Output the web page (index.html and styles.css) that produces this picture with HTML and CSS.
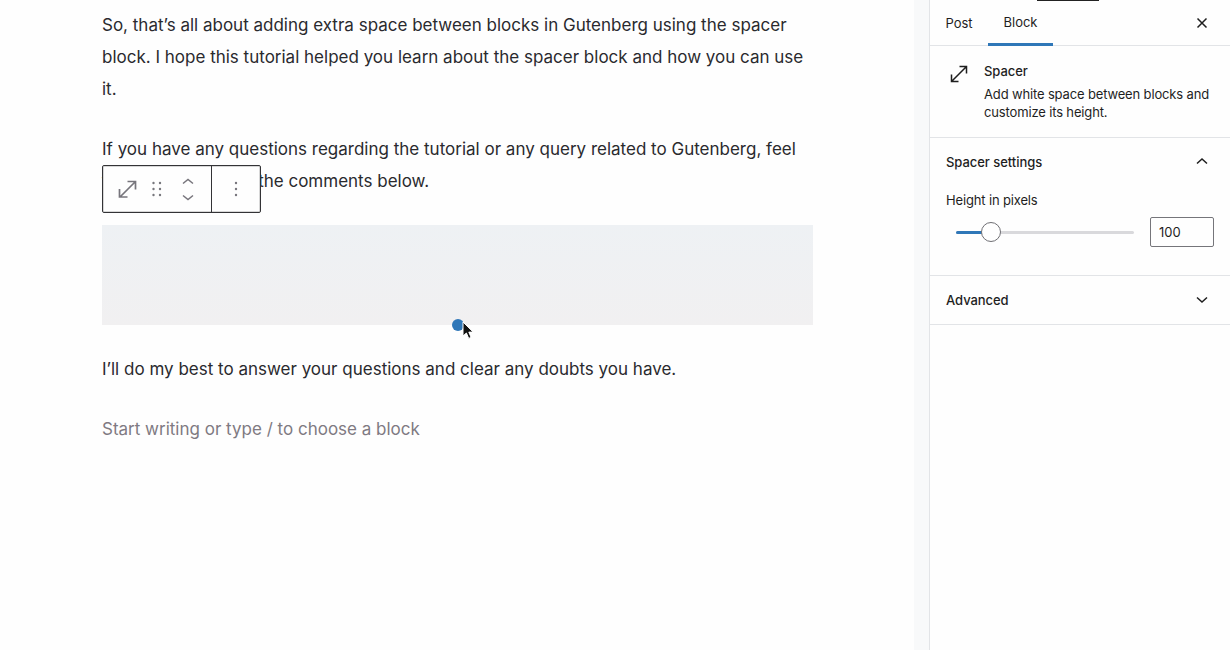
FILE: index.html
```html
<!DOCTYPE html>
<html lang="en">
<head>
    <meta charset="UTF-8">
    <title>Spacer block</title>
    <link rel="stylesheet" href="styles.css">
</head>
<body>
    <main class="editor">
        <div class="content">
            <p class="para">So, that’s all about adding extra space between blocks in Gutenberg using the spacer block. I hope this tutorial helped you learn about the spacer block and how you can use it.</p>
            <p class="para">If you have any questions regarding the tutorial or any query related to Gutenberg, feel <span class="wide-words">free to ask them in </span>the comments below.</p>
            <div class="spacer-block">
                <span class="drag-dot"></span>
                <svg class="cursor" width="14" height="20" viewBox="0 0 14 20"><path d="M2 1v14l3.4-3 2.3 5.4 2.4-1-2.3-5.3h4.4z" fill="#111" stroke="#fff" stroke-width="1"/></svg>
            </div>
            <p class="para">I’ll do my best to answer your questions and clear any doubts you have.</p>
            <p class="para placeholder">Start writing or type / to choose a block</p>

            <div class="block-toolbar">
                <div class="toolbar-group">
                    <svg class="tool-icon" width="24" height="24" viewBox="0 0 24 24"><path d="M5 20 20 5M12.500 4.500h8v8M4.500 12v8h8" fill="none" stroke="#77757c" stroke-width="1.700"/></svg>
                    <svg class="tool-drag" width="12" height="18" viewBox="0 0 12 18"><g fill="#77777c"><circle cx="2.500" cy="3" r="1.200"/><circle cx="9" cy="3" r="1.200"/><circle cx="2.500" cy="9" r="1.200"/><circle cx="9" cy="9" r="1.200"/><circle cx="2.500" cy="15" r="1.200"/><circle cx="9" cy="15" r="1.200"/></g></svg>
                    <svg class="tool-move" width="14" height="26" viewBox="0 0 14 26"><path d="M2 7.500 7 3.500l5 4M2 19.500l5 4 5-4" fill="none" stroke="#77757c" stroke-width="1.500"/></svg>
                </div>
                <div class="toolbar-more">
                    <svg width="4" height="16" viewBox="0 0 4 16"><g fill="#77757c"><circle cx="2" cy="2" r="1.200"/><circle cx="2" cy="8" r="1.200"/><circle cx="2" cy="14" r="1.200"/></g></svg>
                </div>
            </div>
        </div>
    </main>

    <div class="gutter"></div>

    <aside class="sidebar">
        <span class="top-mark"></span>
        <div class="tabs">
            <span class="tab tab-post">Post</span>
            <span class="tab tab-active">Block</span>
            <svg class="close" width="12" height="12" viewBox="0 0 12 12"><path d="M1.500 1.500l9 9M10.500 1.500l-9 9" stroke="#1e1e1e" stroke-width="1.500" fill="none"/></svg>
        </div>
        <div class="block-card">
            <svg class="card-icon" width="18" height="18" viewBox="0 0 18 18"><path d="M1.500 16.500 16.500 1.500M9.500 1.500h7v7M1.500 9.500v7h7" fill="none" stroke="#1e1e1e" stroke-width="1.500"/></svg>
            <div class="card-text">
                <div class="card-title">Spacer</div>
                <div class="card-desc">Add white space between blocks and customize its height.</div>
            </div>
        </div>
        <section class="panel panel-open">
            <div class="panel-head">
                <span>Spacer settings</span>
                <svg class="chevron-up" width="12" height="8" viewBox="0 0 12 8"><path d="M1 6.500 6 2l5 4.500" fill="none" stroke="#1e1e1e" stroke-width="1.500"/></svg>
            </div>
            <div class="field-label">Height in pixels</div>
            <div class="range-row">
                <div class="range">
                    <div class="range-fill"></div>
                    <div class="range-thumb"></div>
                </div>
                <div class="number-input">100</div>
            </div>
        </section>
        <section class="panel">
            <div class="panel-head panel-head-closed">
                <span>Advanced</span>
                <svg width="12" height="8" viewBox="0 0 12 8"><path d="M1 1.500 6 6l5-4.500" fill="none" stroke="#1e1e1e" stroke-width="1.500"/></svg>
            </div>
        </section>
    </aside>
</body>
</html>
```

FILE: styles.css
```css
* {
    box-sizing: border-box;
}
html, body {
    height: 100%;
}
body {
    margin: 0;
    display: flex;
    height: 650px;
    overflow: hidden;
    background: #fefefe;
    color: #2a2a2e;
    font-family: Inter, "Liberation Sans", sans-serif;
}
.editor {
    width: 914px;
    flex: none;
}
.content {
    position: relative;
    width: 711px;
    margin-left: 102px;
    padding-top: 9px;
}
.para {
    margin: 0 0 28px;
    font-size: 17px;
    line-height: 32px;
}
.wide-words {
    word-spacing: 0.4px;
}
.placeholder {
    color: #7f7a82;
}
.spacer-block {
    position: relative;
    height: 100px;
    margin: 0 0 28px;
    background: linear-gradient(#eef1f4, #f1f0f1);
}
.drag-dot {
    position: absolute;
    left: 350px;
    bottom: -6px;
    width: 12px;
    height: 12px;
    border-radius: 50%;
    background: #2f77b8;
}
.cursor {
    position: absolute;
    left: 359px;
    top: 96px;
}
.block-toolbar {
    position: absolute;
    left: 0;
    top: 165px;
    display: flex;
    height: 48px;
    background: #fefefe;
    border: 1px solid #333336;
    border-radius: 2px;
    box-shadow: inset 0 0 0 1px rgba(60, 60, 60, 0.2);
}
.toolbar-group {
    display: flex;
    align-items: center;
    width: 109px;
    padding-left: 12px;
    border-right: 1px solid #333336;
}
.tool-drag {
    margin-left: 12px;
}
.tool-move {
    margin-left: 18px;
}
.toolbar-more {
    display: flex;
    align-items: center;
    justify-content: center;
    width: 48px;
}
.gutter {
    width: 16px;
    flex: none;
    background: #f8f9fa;
    border-right: 1px solid #e2e4e7;
}
.sidebar {
    position: relative;
    flex: 1;
    font-size: 13px;
    letter-spacing: -0.05px;
    color: #1e1e1e;
}
.top-mark {
    position: absolute;
    left: 107px;
    top: 0;
    width: 62px;
    height: 1px;
    background: #222;
}
.tabs {
    display: flex;
    align-items: center;
    height: 46px;
    border-bottom: 1px solid #e2e4e7;
}
.tab {
    display: flex;
    align-items: center;
    justify-content: center;
    height: 46px;
    padding: 0 16px;
    margin-bottom: -1px;
}
.tab-post {
    padding: 0 15.500px 0 15.500px;
}
.tab-active {
    width: 65px;
    border-bottom: 3px solid #2f77b8;
}
.close {
    margin-left: auto;
    margin-right: 22px;
}
.block-card {
    display: flex;
    gap: 16px;
    height: 92px;
    padding: 16px 16px 0 20px;
    border-bottom: 1px solid #e2e4e7;
}
.card-icon {
    flex: none;
    margin-top: 3px;
}
.card-title {
    font-weight: 500;
    line-height: 18px;
    margin-bottom: 5px;
}
.card-desc {
    line-height: 18px;
    letter-spacing: -0.15px;
}
.panel {
    border-bottom: 1px solid #e2e4e7;
}
.panel-open {
    height: 138px;
}
.panel-head {
    display: flex;
    align-items: center;
    justify-content: space-between;
    height: 48px;
    padding: 0 22px 0 16px;
    font-weight: 500;
}
.chevron-up {
    margin-top: -2px;
}
.field-label {
    margin: 5px 16px 0;
    line-height: 18px;
    letter-spacing: -0.15px;
}
.range-row {
    display: flex;
    align-items: center;
    margin: 8px 16px 0 26px;
}
.range {
    position: relative;
    width: 178px;
    height: 3px;
    background: #d9d9dc;
    border-radius: 2px;
}
.range-fill {
    width: 30px;
    height: 3px;
    background: #2f77b8;
    border-radius: 2px;
}
.range-thumb {
    position: absolute;
    left: 25px;
    top: -9px;
    width: 20px;
    height: 20px;
    border: 1px solid #6f6f74;
    border-radius: 50%;
    background: #fff;
}
.number-input {
    width: 64px;
    height: 30px;
    margin-left: 16px;
    padding-left: 8px;
    line-height: 28px;
    border: 1px solid #75757a;
    border-radius: 2px;
}
```
